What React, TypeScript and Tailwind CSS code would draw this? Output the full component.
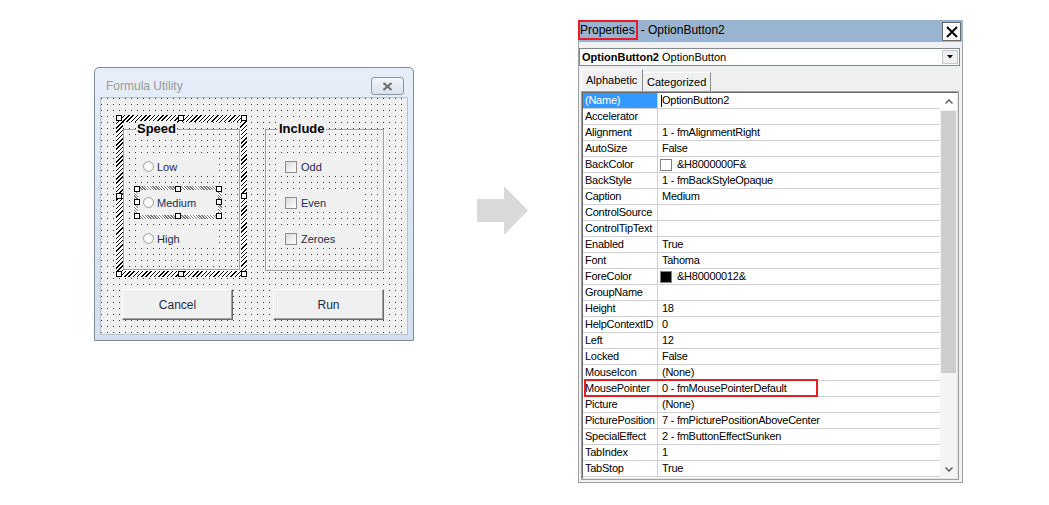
import React from 'react';

// designer canvas: light grey with a 1px dot every 6px
const dots =
  'bg-[#f0f0f0] bg-[image:conic-gradient(at_1px_1px,transparent_270deg,#3a3a3a_0)] bg-[length:6px_6px]';
const hatchBig = 'bg-[image:repeating-linear-gradient(135deg,#000_0_1px,#fff_1px_3px)]';
const hatchSmall = 'bg-[image:repeating-linear-gradient(45deg,#7a7a7a_0_1px,#fff_1px_2px)]';

const Handle = ({ className }: { className: string }) => (
  <span className={'absolute w-[6px] h-[6px] bg-white border border-black ' + className} />
);

const Option = ({ label, kind, selected }: { label: string; kind: 'radio' | 'check'; selected?: boolean }) => (
  <div className={'relative w-[88px] h-[33px] ml-[10px] p-[4px] flex items-center ' + (selected ? hatchSmall : '')}>
    <div className={'w-full flex items-center pl-[5px] gap-[3px] bg-[#f0f0f0] ' + (selected ? 'h-full' : 'h-[19px]')}>
      {kind === 'radio' ? (
        <span className="w-[11px] h-[11px] rounded-full border border-[#a2a2a2] bg-[image:radial-gradient(circle,#fff_45%,#e2e2e2)]" />
      ) : (
        <span className="w-[12px] h-[12px] mr-[1px] border border-[#8e8f8f] bg-[image:linear-gradient(135deg,#dadada,#fff)]" />
      )}
      <span className="text-[11px] leading-[14px] text-[#1b2d4f]">{label}</span>
    </div>
    {selected && (
      <>
        <Handle className="left-0 top-0" />
        <Handle className="left-[41px] top-0" />
        <Handle className="right-0 top-0" />
        <Handle className="left-0 top-[13px]" />
        <Handle className="right-0 top-[13px]" />
        <Handle className="left-0 bottom-0" />
        <Handle className="left-[41px] bottom-0" />
        <Handle className="right-0 bottom-0" />
      </>
    )}
  </div>
);

const Frame = ({ title, className, children }: { title: string; className: string; children: React.ReactNode }) => (
  <div className={'relative border border-[#a0a0a0] shadow-[inset_1px_1px_0_#fff,1px_1px_0_#fff] ' + className}>
    <span className="absolute left-[12px] -top-[9px] px-[1px] bg-[#f0f0f0] text-[13px] font-bold leading-[16px] text-black">
      {title}
    </span>
    <div className="flex flex-col gap-[3px] pt-[20px]">{children}</div>
  </div>
);

const FormWindow = () => (
  <div className="mt-[67px] ml-[94px] w-[320px] h-[274px] shrink-0 rounded-t-[5px] border border-[#7f8c9d] bg-[image:linear-gradient(#e6eef8,#d3dfee)] flex flex-col">
    {/* title bar */}
    <div className="h-[29px] pt-[7px] pl-[11px] pr-[9px] flex items-center justify-between">
      <span className="text-[12px] text-[#9a9a9a]">Formula Utility</span>
      <div className="w-[33px] h-[18px] rounded-[3px] border border-[#8895a8] bg-[image:linear-gradient(#f3f6fa,#d8e1ec)] flex items-center justify-center">
        <svg width="11" height="9" viewBox="0 0 11 9">
          <path d="M1.5 1 L9.5 8 M9.5 1 L1.5 8" stroke="#6f6f6f" strokeWidth="2.2" fill="none" />
        </svg>
      </div>
    </div>
    {/* client */}
    <div className={'mx-[5px] h-[238px] border border-[#b5c3d5] pt-[17px] pl-[15px] flex flex-col ' + dots}>
      <div className="flex items-start">
        <div className={'relative w-[131px] h-[162px] p-[7px] ' + hatchBig}>
          <div className={'w-full h-full pt-[7px] ' + dots}>
            <Frame title="Speed" className="w-[117px] h-[141px]">
              <Option label="Low" kind="radio" />
              <Option label="Medium" kind="radio" selected />
              <Option label="High" kind="radio" />
            </Frame>
          </div>
          <Handle className="left-0 top-0" />
          <Handle className="left-[62px] top-0" />
          <Handle className="right-0 top-0" />
          <Handle className="left-0 top-[78px]" />
          <Handle className="right-0 top-[78px]" />
          <Handle className="left-0 bottom-0" />
          <Handle className="left-[62px] bottom-0" />
          <Handle className="right-0 bottom-0" />
        </div>
        <Frame title="Include" className="ml-[18px] mt-[14px] w-[119px] h-[142px]">
          <Option label="Odd" kind="check" />
          <Option label="Even" kind="check" />
          <Option label="Zeroes" kind="check" />
        </Frame>
      </div>
      <div className="flex mt-[12px] ml-[6px]">
        {['Cancel', 'Run'].map((b, i) => (
          <div
            key={b}
            className={
              'w-[111px] h-[31px] flex items-center justify-center bg-[#f0f0f0] border border-t-white border-l-white border-r-[#696969] border-b-[#696969] shadow-[inset_-1px_-1px_0_#a0a0a0] text-[12px] text-[#1b2d4f] ' +
              (i === 1 ? 'ml-[40px]' : '')
            }
          >
            {b}
          </div>
        ))}
      </div>
    </div>
  </div>
);

type Row = { name: string; value: string; swatch?: string };

const rows: Row[] = [
  { name: '(Name)', value: 'OptionButton2' },
  { name: 'Accelerator', value: '' },
  { name: 'Alignment', value: '1 - fmAlignmentRight' },
  { name: 'AutoSize', value: 'False' },
  { name: 'BackColor', value: '&H8000000F&', swatch: 'bg-white' },
  { name: 'BackStyle', value: '1 - fmBackStyleOpaque' },
  { name: 'Caption', value: 'Medium' },
  { name: 'ControlSource', value: '' },
  { name: 'ControlTipText', value: '' },
  { name: 'Enabled', value: 'True' },
  { name: 'Font', value: 'Tahoma' },
  { name: 'ForeColor', value: '&H80000012&', swatch: 'bg-black' },
  { name: 'GroupName', value: '' },
  { name: 'Height', value: '18' },
  { name: 'HelpContextID', value: '0' },
  { name: 'Left', value: '12' },
  { name: 'Locked', value: 'False' },
  { name: 'MouseIcon', value: '(None)' },
  { name: 'MousePointer', value: '0 - fmMousePointerDefault' },
  { name: 'Picture', value: '(None)' },
  { name: 'PicturePosition', value: '7 - fmPicturePositionAboveCenter' },
  { name: 'SpecialEffect', value: '2 - fmButtonEffectSunken' },
  { name: 'TabIndex', value: '1' },
  { name: 'TabStop', value: 'True' },
];

const PropertiesWindow = () => (
  <div className="ml-[50px] mt-[20px] w-[385px] h-[463px] shrink-0 flex flex-col">
    {/* title bar */}
    <div className="h-[22px] shrink-0 bg-[#99b4d1] flex items-start justify-between">
      <div className="flex items-center text-[12px] text-black">
        <span className="h-[20px] border-2 border-[#ed1c24] leading-[16px] pr-[1px]">Properties</span>
        <span className="pl-[3px] leading-[18px]">- OptionButton2</span>
      </div>
      <div className="mt-[2px] mr-[2px] w-[19px] h-[19px] bg-[#fafafa] border border-[#6b6b6b] flex items-center justify-center">
        <svg width="12" height="12" viewBox="0 0 12 12">
          <path d="M1 1 L11 11 M11 1 L1 11" stroke="#000" strokeWidth="1.8" fill="none" />
        </svg>
      </div>
    </div>
    {/* body */}
    <div className="flex-1 bg-[#f0f0f0] border-x border-b border-[#a0a0a0] flex flex-col">
      <div className="mt-[6px] w-[381px] h-[18px] shrink-0 bg-white border border-[#828790] flex items-center text-[11px]">
        <span className="pl-[2px] font-bold">OptionButton2</span>
        <span className="pl-[3px]">OptionButton</span>
        <div className="ml-auto mr-[1px] w-[16px] h-[14px] bg-[#f0f0f0] border border-[#c8c8c8] flex items-center justify-center">
          <svg width="6" height="4" viewBox="0 0 6 4">
            <path d="M0 0 H6 L3 3.5 Z" fill="#000" />
          </svg>
        </div>
      </div>
      {/* tabs */}
      <div className="mt-[3px] pl-[2px] flex items-end text-[11px] shrink-0">
        <div className="w-[62px] h-[22px] pl-[4px] pt-[2px] border-t border-l border-white border-r border-r-[#8a8a8a] bg-[#f0f0f0]">
          Alphabetic
        </div>
        <div className="w-[68px] h-[19px] pl-[4px] pt-[1px] border-t border-white border-r border-r-[#8a8a8a]">
          Categorized
        </div>
      </div>
      {/* grid */}
      <div className="ml-[2px] w-[378px] h-[389px] shrink-0 border border-[#a0a0a0]">
        <div className="w-full h-full flex border border-t-[#696969] border-l-[#696969] border-r-[#e3e3e3] border-b-[#e3e3e3] bg-white">
          <div className="flex-1 flex flex-col overflow-hidden">
            {rows.map((r, i) => (
              <div
                key={r.name}
                className="relative flex h-[16px] shrink-0 border-b border-[#cfcfcf] text-[11px] leading-[15px] tracking-[-0.25px] text-black"
              >
                <div
                  className={
                    'w-[75px] shrink-0 pl-[2px] border-r border-[#cfcfcf] whitespace-nowrap overflow-hidden ' +
                    (i === 0 ? 'bg-[#3399ff] text-white' : '')
                  }
                >
                  {r.name}
                </div>
                <div className={'relative flex-1 flex items-center whitespace-nowrap ' + (r.swatch ? 'pl-[2px]' : 'pl-[4px]')}>
                  {r.swatch && <span className={'w-[12px] h-[12px] mr-[5px] border border-[#808080] ' + r.swatch} />}
                  {r.value}
                  {i === 0 && <span className="absolute left-[3px] top-[2px] w-px h-[12px] bg-black" />}
                </div>
                {r.name === 'MousePointer' && (
                  <span className="absolute left-[1px] -top-[2px] w-[234px] h-[18px] border-2 border-[#ed1c24] pointer-events-none" />
                )}
              </div>
            ))}
          </div>
          {/* scrollbar */}
          <div className="w-[17px] shrink-0 flex flex-col bg-[#f4f4f4]">
            <div className="h-[17px] bg-white flex items-center justify-center">
              <svg width="8" height="5" viewBox="0 0 8 5">
                <path d="M0.5 4.5 L4 1 L7.5 4.5" stroke="#606060" strokeWidth="1.5" fill="none" />
              </svg>
            </div>
            <div className="mt-px mx-px h-[262px] bg-[#cdcdcd]" />
            <div className="flex-1" />
            <div className="h-[18px] flex items-center justify-center">
              <svg width="8" height="5" viewBox="0 0 8 5">
                <path d="M0.5 0.5 L4 4 L7.5 0.5" stroke="#606060" strokeWidth="1.5" fill="none" />
              </svg>
            </div>
          </div>
        </div>
      </div>
    </div>
  </div>
);

export default function App() {
  return (
    <div className="w-[1049px] h-[505px] bg-white flex items-start overflow-hidden font-['Liberation_Sans',Arial,sans-serif]">
      <FormWindow />
      <svg className="ml-[63px] mt-[186px] shrink-0" width="51" height="49" viewBox="0 0 51 49">
        <path d="M0 13 H27 V0 L51 24.5 L27 49 V36 H0 Z" fill="#d9d9d9" />
      </svg>
      <PropertiesWindow />
    </div>
  );
}
